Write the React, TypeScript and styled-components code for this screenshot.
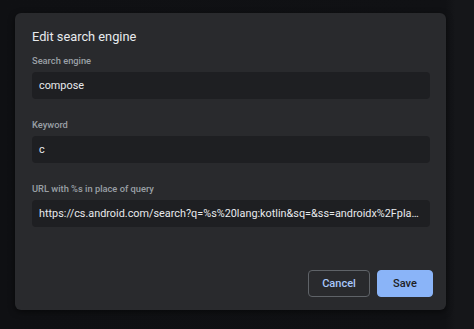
import React from "react";
import styled, { createGlobalStyle } from "styled-components";

const Global = createGlobalStyle`
  html, body { margin: 0; padding: 0; background: #101114; }
  body { font-family: Roboto, "Noto Sans", "Liberation Sans", sans-serif; }
  * { box-sizing: border-box; }
`;

const Page = styled.div`
  width: 474px;
  height: 329px;
  padding: 13px 0 0 15px;
  background: linear-gradient(90deg, #0f1013 0%, #101114 94%, #151619 96%, #151619 100%);
`;

const Dialog = styled.div`
  width: 431px;
  height: 297px;
  background: #292a2d;
  border-radius: 6px;
  box-shadow: 0 2px 6px rgba(0, 0, 0, 0.5);
  display: flex;
  flex-direction: column;
  padding: 15px 0 13px 0;
`;

const Title = styled.h1`
  margin: 0 16px 0 17px;
  font-size: 12.8px;
  line-height: 17px;
  font-weight: 400;
  color: #e8eaed;
`;

const Fields = styled.div`
  display: flex;
  flex-direction: column;
  padding: 0 16px 0 17px;
  margin-top: 10px;
  gap: 20px;
`;

const Field = styled.div`
  display: flex;
  flex-direction: column;
  gap: 5px;
`;

const Label = styled.label`
  font-size: 9.3px;
  line-height: 12px;
  font-weight: 500;
  color: #9aa0a6;
`;

const Input = styled.div`
  height: 27px;
  background: #1e1f22;
  border-radius: 4px;
  padding: 0 6px 0 7px;
  display: flex;
  align-items: center;
  font-size: 10.85px;
  color: #e8eaed;
  white-space: nowrap;
`;

const Footer = styled.div`
  margin-top: auto;
  display: flex;
  justify-content: flex-end;
  gap: 7px;
  padding-right: 13px;
`;

const Button = styled.button<{ $primary?: boolean }>`
  height: 27px;
  width: ${(p) => (p.$primary ? "56px" : "62px")};
  border-radius: 4px;
  font-family: inherit;
  font-size: 11px;
  font-weight: 500;
  cursor: pointer;
  border: 1px solid ${(p) => (p.$primary ? "#8ab4f8" : "#5f6368")};
  background: ${(p) => (p.$primary ? "#8ab4f8" : "transparent")};
  color: ${(p) => (p.$primary ? "#202124" : "#a8c7fa")};
`;

const fields = [
  { label: "Search engine", value: "compose" },
  { label: "Keyword", value: "c" },
  {
    label: "URL with %s in place of query",
    value: "https://cs.android.com/search?q=%s%20lang:kotlin&sq=&ss=androidx%2Fpla…",
  },
];

export default function App() {
  return (
    <>
      <Global />
      <Page>
        <Dialog>
          <Title>Edit search engine</Title>
          <Fields>
            {fields.map((f) => (
              <Field key={f.label}>
                <Label>{f.label}</Label>
                <Input>{f.value}</Input>
              </Field>
            ))}
          </Fields>
          <Footer>
            <Button>Cancel</Button>
            <Button $primary>Save</Button>
          </Footer>
        </Dialog>
      </Page>
    </>
  );
}
